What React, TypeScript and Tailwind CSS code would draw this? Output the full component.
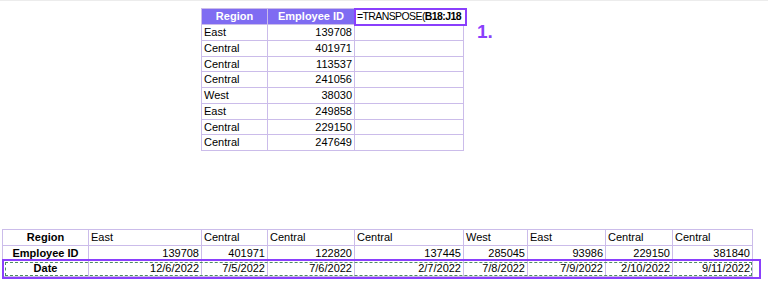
import React from 'react';

const topRows: [string, string][] = [
  ['East', '139708'],
  ['Central', '401971'],
  ['Central', '113537'],
  ['Central', '241056'],
  ['West', '38030'],
  ['East', '249858'],
  ['Central', '229150'],
  ['Central', '247649'],
];

const regions = ['East', 'Central', 'Central', 'Central', 'West', 'East', 'Central', 'Central'];
const ids = ['139708', '401971', '122820', '137445', '285045', '93986', '229150', '381840'];
const dates = ['12/6/2022', '7/5/2022', '7/6/2022', '2/7/2022', '7/8/2022', '7/9/2022', '2/10/2022', '9/11/2022'];

const colWidths = ['w-[113px]', 'w-[66px]', 'w-[87px]', 'w-[109px]', 'w-[64px]', 'w-[78px]', 'w-[67px]', 'w-[80px]'];

const cell = 'border-r border-b border-[#cbbcea] px-[2px] flex items-center whitespace-nowrap overflow-hidden';

const App: React.FC = () => {
  return (
    <div className="relative w-[768px] h-[284px] bg-white text-[11px] text-black overflow-hidden" style={{ fontFamily: '"Liberation Sans", Arial, sans-serif' }}>
      <div className="h-px w-full bg-[#ececec]" />

      {/* source range */}
      <div className="flex pl-[201px] pt-[7px]">
        <div className="relative border-l border-t border-[#cbbcea]">
          <div className="flex h-[16px]">
            <div className={`${cell} w-[66px] justify-center bg-[#7f6cf2] text-white font-bold`}>Region</div>
            <div className={`${cell} w-[87px] justify-center bg-[#7f6cf2] text-white font-bold`}>Employee ID</div>
            <div className={`${cell} w-[109px]`} />
          </div>
          {topRows.map(([r, id], i) => (
            <div key={i} className="flex h-[15.75px]">
              <div className={`${cell} w-[66px]`}>{r}</div>
              <div className={`${cell} w-[87px] justify-end`}>{id}</div>
              <div className={`${cell} w-[109px]`} />
            </div>
          ))}
          <div className="absolute left-[152px] top-[-1px] w-[113px] h-[18px] border-2 border-[#8a3ffc] bg-white flex items-center pl-px whitespace-nowrap overflow-hidden text-[10.5px] tracking-[-0.6px]">
            =TRANSPOSE(<span className="font-bold">B18:J18</span>
          </div>
        </div>
        <div className="ml-[13px] mt-[14px] text-[19px] font-bold leading-none text-[#8a3ffc]">1.</div>
      </div>

      {/* transposed result */}
      <div className="relative mt-[78px] ml-[2px] border-l border-t border-[#cbbcea] w-max">
        <div className="flex h-[16px]">
          <div className={`${cell} w-[86px] justify-center font-bold`}>Region</div>
          {regions.map((r, i) => (
            <div key={i} className={`${cell} ${colWidths[i]}`}>{r}</div>
          ))}
        </div>
        <div className="flex h-[15px]">
          <div className={`${cell} w-[86px] justify-center font-bold`}>Employee ID</div>
          {ids.map((v, i) => (
            <div key={i} className={`${cell} ${colWidths[i]} justify-end`}>{v}</div>
          ))}
        </div>
        <div className="flex h-[16px]">
          <div className={`${cell} w-[86px] justify-center font-bold`}>Date</div>
          {dates.map((v, i) => (
            <div key={i} className={`${cell} ${colWidths[i]} justify-end`}>{v}</div>
          ))}
        </div>
        <div className="absolute left-[2px] top-[32px] w-[747px] h-[14px] border border-dashed border-[#4f8f60] pointer-events-none" />
        <div className="absolute left-[-1px] top-[29px] w-[759px] h-[20px] border-2 border-[#8a3ffc] pointer-events-none" />
      </div>
    </div>
  );
};

export default App;
